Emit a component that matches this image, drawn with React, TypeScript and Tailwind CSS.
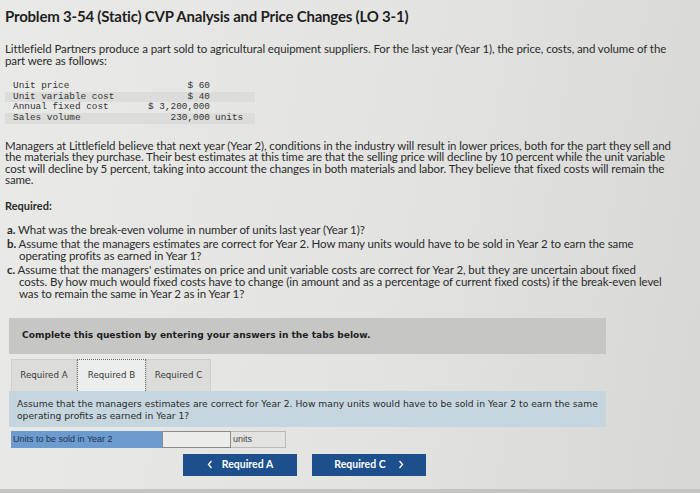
import React from 'react';

const body = "font-['Lato',sans-serif] text-[#2b2b2b]";
const vera = "font-['DejaVu_Sans',sans-serif]";

const rows: { label: string; value: string; shaded: boolean }[] = [
	{ label: 'Unit price', value: '$ 60', shaded: false },
	{ label: 'Unit variable cost', value: '$ 40', shaded: true },
	{ label: 'Annual fixed cost', value: '$ 3,200,000', shaded: false },
	{ label: 'Sales volume', value: '230,000', shaded: true },
];

function Chevron({ dir }: { dir: 'left' | 'right' }) {
	return (
		<svg width="6" height="9" viewBox="0 0 6 9" className="inline-block">
			<path
				d={dir === 'left' ? 'M4.5 1 L1.5 4.5 L4.5 8' : 'M1.5 1 L4.5 4.5 L1.5 8'}
				fill="none"
				stroke="white"
				strokeWidth="1.3"
			/>
		</svg>
	);
}

export default function App() {
	return (
		<div className="relative h-[493px] w-[700px] overflow-hidden bg-[linear-gradient(100deg,#e9eae8_0%,#e3e4e2_55%,#d7d8d6_100%)]">
			<div className={`px-[5px] pt-[7px] ${body}`}>
				<h1 className="text-[15px] font-bold leading-[18px] tracking-[-0.2px] text-[#1f1f1f]">
					Problem 3-54 (Static) CVP Analysis and Price Changes (LO 3-1)
				</h1>
				<p className="mt-[18px] text-[11.5px] leading-[12px] tracking-[-0.1px]">
					Littlefield Partners produce a part sold to agricultural equipment suppliers. For the last year (Year 1), the price, costs, and volume of the
					<br />
					part were as follows:
				</p>

				<div className="mt-[14px] w-[250px] font-['Liberation_Mono',monospace] text-[9.4px] leading-[10.7px] text-[#333]">
					{rows.map((r) => (
						<div key={r.label} className={`flex ${r.shaded ? 'bg-[#dcdddb]' : ''}`}>
							<span className="w-[130px] pl-[8px]">{r.label}</span>
							<span className="w-[75px] text-right">{r.value}</span>
							{r.label === 'Sales volume' && <span className="pl-[5px]">units</span>}
						</div>
					))}
				</div>

				<p className="mt-[16px] text-[11.5px] leading-[11.5px] tracking-[-0.1px]">
					Managers at Littlefield believe that next year (Year 2), conditions in the industry will result in lower prices, both for the part they sell and
					<br />
					the materials they purchase. Their best estimates at this time are that the selling price will decline by 10 percent while the unit variable
					<br />
					cost will decline by 5 percent, taking into account the changes in both materials and labor. They believe that fixed costs will remain the
					<br />
					same.
				</p>

				<div className="mt-[14px] text-[11px] font-bold leading-[12px]">Required:</div>

				<div className="mt-[12px] flex flex-col gap-[2px] pl-[2px] text-[11.5px] leading-[12px] tracking-[-0.1px]">
					<div>
						<b>a.</b> What was the break-even volume in number of units last year (Year 1)?
					</div>
					<div className="pl-[12px] -indent-[12px]">
						<b>b.</b> Assume that the managers estimates are correct for Year 2. How many units would have to be sold in Year 2 to earn the same
						<br />
						operating profits as earned in Year 1?
					</div>
					<div className="pl-[12px] -indent-[12px]">
						<b>c.</b> Assume that the managers' estimates on price and unit variable costs are correct for Year 2, but they are uncertain about fixed
						<br />
						costs. By how much would fixed costs have to change (in amount and as a percentage of current fixed costs) if the break-even level
						<br />
						was to remain the same in Year 2 as in Year 1?
					</div>
				</div>
			</div>

			<div className="ml-[9px] mt-[18px] w-[597px]">
				<div className={`flex h-[36px] items-center bg-[#c6c7c5] pl-[13px] text-[9.1px] font-bold text-[#1e1e1e] ${vera}`}>
					Complete this question by entering your answers in the tabs below.
				</div>

				<div className={`mt-[5px] flex h-[32px] pl-[2px] text-[8.7px] text-[#3a3a3a] ${vera}`}>
					<div className="flex w-[66px] items-center justify-center border border-b-0 border-[#cfcfcd] bg-[#dcdddb]">
						Required A
					</div>
					<div className="flex w-[69px] items-center justify-center border border-dotted border-b-0 border-[#666] bg-[#eceded]">
						Required B
					</div>
					<div className="flex w-[65px] items-center justify-center border border-b-0 border-[#cfcfcd] bg-[#dcdddb]">
						Required C
					</div>
				</div>

				<div className={`h-[36px] bg-[#c6d6df] pl-[8px] pt-[7px] text-[9.2px] leading-[12px] text-[#2a2a2a] ${vera}`}>
					Assume that the managers estimates are correct for Year 2. How many units would have to be sold in Year 2 to earn the same
					<br />
					operating profits as earned in Year 1?
				</div>
			</div>

			<div className="ml-[11px] mt-[4px] flex h-[17px] font-['Liberation_Sans',sans-serif] text-[9px]">
				<div className="flex w-[151px] items-center bg-[#6c9bcf] pl-[2px] text-[#1f3550]">Units to be sold in Year 2</div>
				<div className="w-[69px] border border-[#8a8a8a] bg-[#ecedeb]" />
				<div className="flex w-[55px] items-center border border-l-0 border-[#b9bab8] bg-[#e3e4e2] pl-[2px] text-[#444]">units</div>
			</div>

			<div className="ml-[183px] mt-[6px] flex gap-[15px] font-['Lato',sans-serif] text-[10.5px] font-bold text-white">
				<div className="flex h-[22px] w-[114px] items-center justify-center gap-[9px] bg-[#1d4f8c]">
					<Chevron dir="left" />
					<span>Required A</span>
				</div>
				<div className="flex h-[22px] w-[114px] items-center justify-center gap-[12px] bg-[#1d4f8c]">
					<span>Required C</span>
					<Chevron dir="right" />
				</div>
			</div>

			<div className="absolute bottom-0 left-0 h-[4px] w-full bg-[#c4c5c3]" />
		</div>
	);
}
